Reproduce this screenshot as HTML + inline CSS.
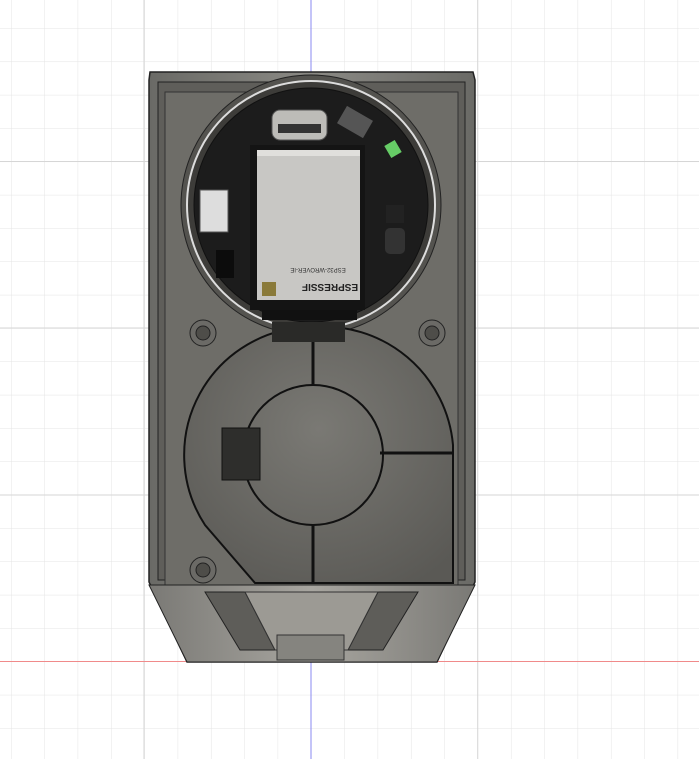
<!DOCTYPE html>
<html><head><style>html,body{margin:0;padding:0;background:#fff;width:699px;height:759px;overflow:hidden}</style></head>
<body>
<svg width="699" height="759" viewBox="0 0 699 759" xmlns="http://www.w3.org/2000/svg">
<defs>
<pattern id="g" width="33.33" height="33.33" patternUnits="userSpaceOnUse" x="11" y="28.2">
<path d="M0 0H33.33M0 0V33.33" stroke="#e4e4e4" stroke-width="1" fill="none"/>
</pattern>
<linearGradient id="body" x1="0" x2="1"><stop offset="0" stop-color="#6a6a66"/><stop offset="0.5" stop-color="#8a8984"/><stop offset="1" stop-color="#6a6a66"/></linearGradient>
<radialGradient id="fan" cx="0.5" cy="0.4" r="0.7"><stop offset="0" stop-color="#7a7974"/><stop offset="1" stop-color="#5a5955"/></radialGradient>
<linearGradient id="bot" x1="0" x2="1"><stop offset="0" stop-color="#7a7975"/><stop offset="0.5" stop-color="#a8a6a0"/><stop offset="1" stop-color="#7a7975"/></linearGradient>
</defs>
<rect width="699" height="759" fill="url(#g)"/>
<path d="M144 0V759M477.7 0V759M0 161.5H699M0 328H699M0 495H699" stroke="#d6d6d6"/>
<line x1="311" y1="0" x2="311" y2="759" stroke="#8a8af0"/>
<line x1="0" y1="661.5" x2="699" y2="661.5" stroke="#f08a8a"/>
<path d="M150 72H473L475 80V582L437 662H187L149 582V80Z" fill="url(#body)" stroke="#222" stroke-width="1.5"/>
<path d="M158 82H465V580H158Z" fill="#5f5e5a" stroke="#222"/>
<path d="M165 92H458V585H165Z" fill="#6e6d68" stroke="#333"/>
<path d="M149 585H475L437 662H187Z" fill="url(#bot)" stroke="#222"/>
<path d="M205 592H245L275 650H240Z" fill="#5e5d59" stroke="#222"/>
<path d="M418 592H378L348 650H383Z" fill="#5e5d59" stroke="#222"/>
<path d="M245 592H378L348 650H275Z" fill="#9c9a94" stroke="#333"/>
<rect x="277" y="635" width="67" height="25" fill="#85847f" stroke="#333"/>
<circle cx="311" cy="205" r="130" fill="#54534f" stroke="#222"/>
<circle cx="311" cy="205" r="124" fill="#3d3c39" stroke="#ddd" stroke-width="2"/>
<circle cx="311" cy="205" r="117" fill="#1c1c1c" stroke="#111"/>
<rect x="250" y="145" width="115" height="165" fill="#141414"/>
<rect x="257" y="150" width="103" height="150" fill="#c8c7c4"/>
<rect x="257" y="150" width="103" height="6" fill="#e0dfdc"/>
<text x="330" y="290" font-family="Liberation Sans,sans-serif" font-size="10" font-weight="bold" fill="#222" text-anchor="middle" transform="rotate(180 330 287)">ESPRESSIF</text>
<text x="318" y="272" font-family="Liberation Sans,sans-serif" font-size="6" fill="#333" text-anchor="middle" transform="rotate(180 318 270)">ESP32-WROVER-IE</text>
<rect x="272" y="110" width="55" height="30" rx="8" fill="#bdbcb8" stroke="#555"/>
<rect x="278" y="124" width="43" height="9" fill="#333"/>
<rect x="340" y="112" width="30" height="20" fill="#555" transform="rotate(30 355 122)"/>
<rect x="387" y="142" width="12" height="14" fill="#6c6" transform="rotate(-30 393 149)"/>
<rect x="200" y="190" width="28" height="42" fill="#ddd" stroke="#555"/>
<rect x="216" y="250" width="18" height="28" fill="#0c0c0c"/>
<rect x="386" y="205" width="18" height="18" fill="#222"/>
<rect x="385" y="228" width="20" height="26" rx="5" fill="#333"/>
<rect x="262" y="282" width="14" height="14" fill="#8a7a3a"/>
<circle cx="203" cy="333" r="13" fill="#6b6a66" stroke="#222"/>
<circle cx="432" cy="333" r="13" fill="#6b6a66" stroke="#222"/>
<circle cx="203" cy="570" r="13" fill="#6b6a66" stroke="#222"/>
<circle cx="203" cy="333" r="7" fill="#4e4d49" stroke="#222"/>
<circle cx="432" cy="333" r="7" fill="#4e4d49" stroke="#222"/>
<circle cx="203" cy="570" r="7" fill="#4e4d49" stroke="#222"/>
<path d="M313 327A130 130 0 0 1 453 445V583H255L205 525A128 128 0 0 1 313 327Z" fill="url(#fan)" stroke="#111" stroke-width="2"/>
<circle cx="313" cy="455" r="70" fill="none" stroke="#111" stroke-width="2"/>
<path d="M313 327V385M313 525V583M380 453H453" stroke="#111" stroke-width="3"/>
<rect x="222" y="428" width="38" height="52" fill="#2e2e2c" stroke="#111"/>
<path d="M272 322H345V342H272Z" fill="#2a2a28"/>
<rect x="262" y="310" width="95" height="10" fill="#111"/>
</svg>
</body></html>
